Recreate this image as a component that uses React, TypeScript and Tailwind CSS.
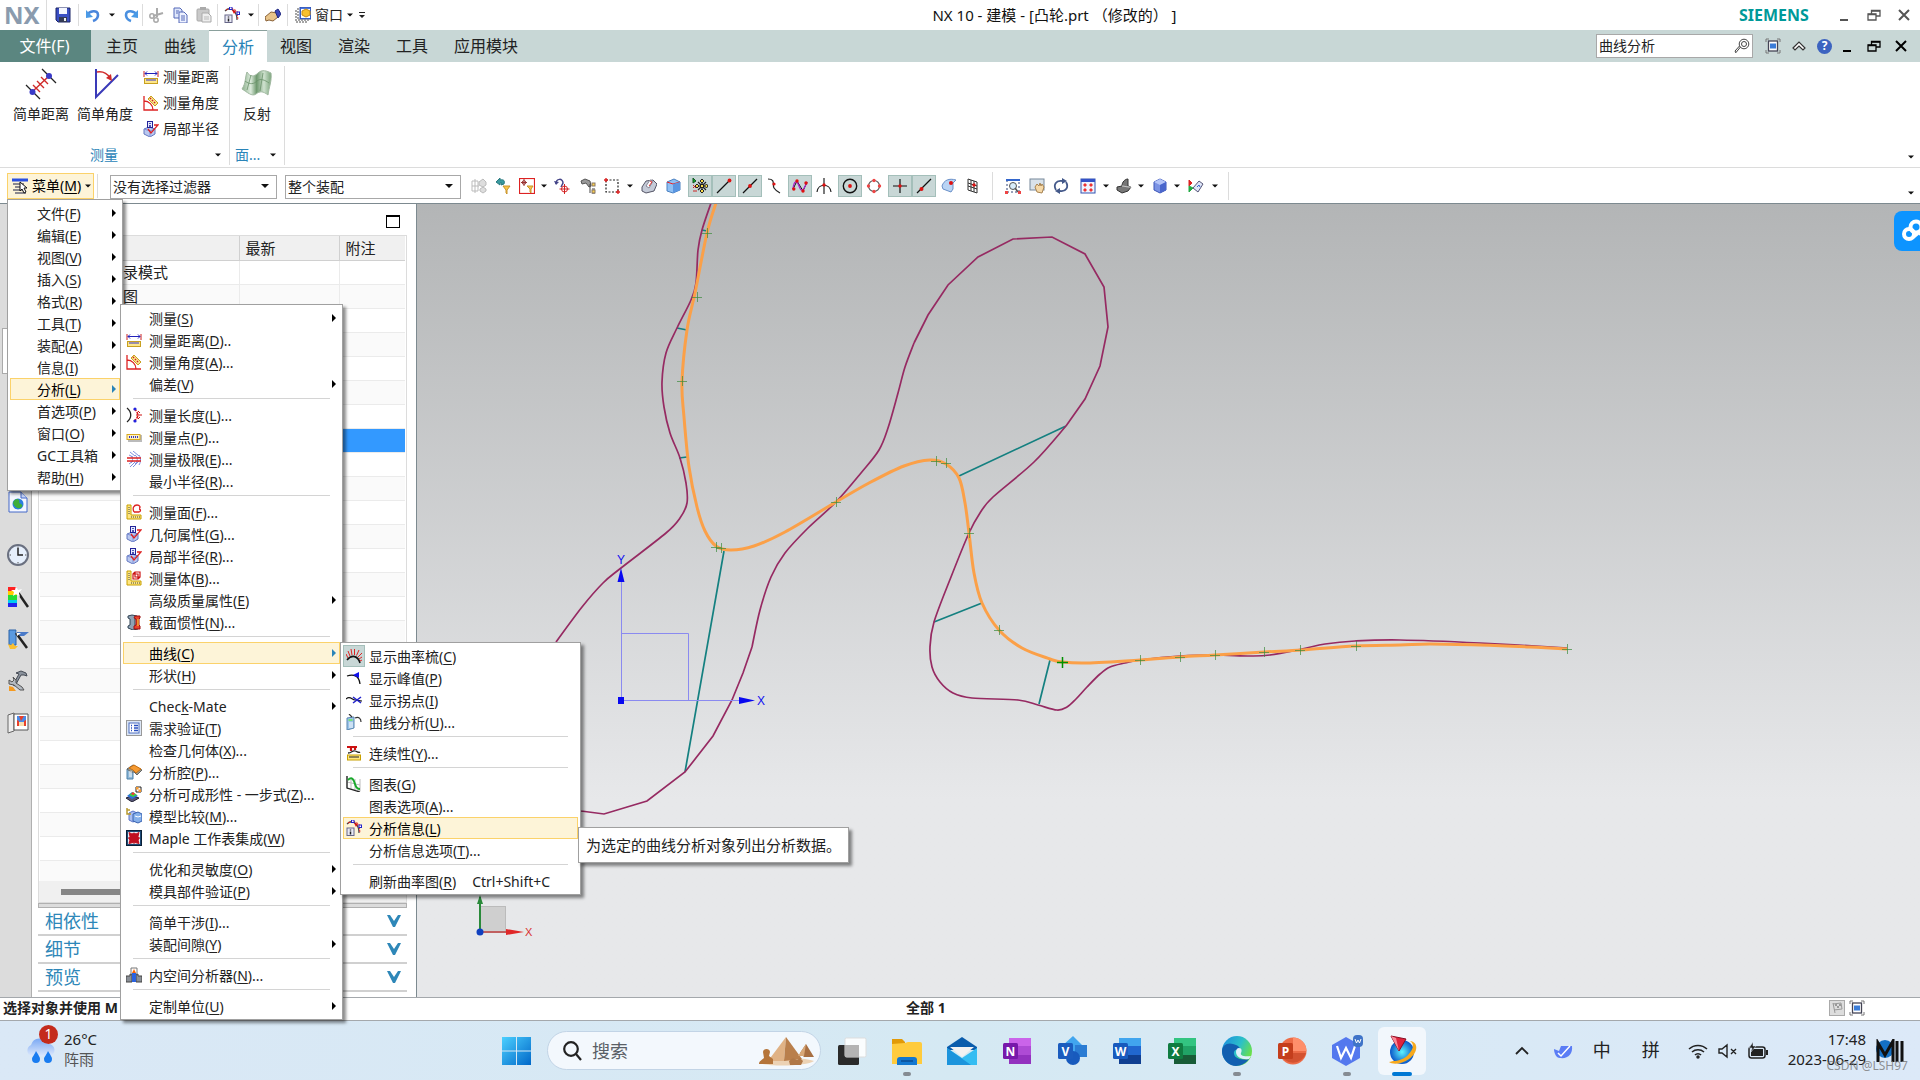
import React from "react";

type IconName = keyof typeof icons;

const icons = {
  dist: (<><path d="M1 2v6M15 2v6" stroke="#c22" /><path d="M2 4.5h12M4 2.5l-2 2 2 2M12 2.5l2 2-2 2" stroke="#22b" /><rect x="1.5" y="9.5" width="13" height="5" fill="#fde68a" stroke="#c8a020" /><path d="M4 10v2M6 10v2M8 10v2M10 10v2M12 10v2" stroke="#33c" /></>),
  angle: (<><path d="M1 1v14h14M1 6c5 0 9 4 9 9" stroke="#d22" strokeWidth="1.3" /><path d="M5 4L8 1l7 7-3 3z" fill="#fbe08a" stroke="#c8a020" /><path d="M7 4l1-1M9 6l1-1M11 8l1-1" stroke="#c22" strokeWidth="1.5" /></>),
  length: (<><path d="M1 1c5 4 5 10 0 14" stroke="#222" strokeWidth="1.3" /><path d="M8 2c5 3 5 9 0 12" stroke="#d11" strokeDasharray="3 1" strokeWidth="1.5" /><path d="M10 8h6M12 4l2 2M12 12l2-2" stroke="#c11" /><circle cx="9" cy="2" r="1.6" fill="#22d" /><circle cx="9" cy="14" r="1.6" fill="#22d" /></>),
  ruler: (<><path d="M2 12h13V6" stroke="#bbb" strokeWidth="2" /><rect x="1" y="5.500" width="13" height="5" fill="#fff3c0" stroke="#d8a820" /><path d="M3.500 7v2M5.500 7v2M7.500 7v2M9.500 7v2M11.500 7v2" stroke="#33c" /></>),
  extreme: (<><path d="M4 1l5 4M7 0l6 5M3 4l4 2M3 13l4-3M4 16l5-5M7 16l6-6M9 4c3 2 3 7 0 9M5 5c2 2 2 5 0 7M13 4c2 3 2 7 0 10" stroke="#8090e0" /><path d="M1 7h14M1 10h14" stroke="#d22" strokeWidth="1.3" /></>),
  face: (<><path d="M1 1h4v10h10v4H1z" fill="#ffe680" stroke="#c8a000" /><path d="M3 3v8M5 13h9" stroke="#444" strokeDasharray="1 1" /><path d="M8 8c-2-4 0-7 3-7s4 3 2 3M8 8h5c2-1 2-3 0-3" fill="#fff" stroke="#d22" strokeWidth="1.3" /></>),
  geo: (<><path d="M1 8l5-2 6 2v5l-5 3-6-3z" fill="#b9c8f0" stroke="#6478c0" /><path d="M1 8l6 2 5-2M7 10v6" stroke="#7e92d8" /><rect x="4.500" y=".5" width="5" height="6" fill="#e6ecff" stroke="#229" /><path d="M7 2v1M7 4v2" stroke="#229" strokeWidth="1.500" /><path d="M5 8l3 4 7-8h-4" stroke="#d22" strokeWidth="1.300" /></>),
  body: (<><path d="M1 1h4v10h10v4H1z" fill="#ffe680" stroke="#c8a000" /><path d="M3 3v8M5 13h9" stroke="#444" strokeDasharray="1 1" /><path d="M7 4h5v5H7zM9 2h5v5H9zM7 4l2-2M12 9l2-2" stroke="#c11" strokeWidth="1.200" /></>),
  inertia: (<><path d="M2 2l4-1 5 1v2L9 5v6l3 2v2l-5 1-5-2v-2l2-1V5L2 4z" fill="#8fa3b5" stroke="#345" /><path d="M9 2h5v2l-1 1v6l1 1v3H8v-3l2-1V5L8 4z" fill="#e8412c" stroke="#911" /><path d="M12 5v7" stroke="#fd3" /></>),
  list: (<><rect x=".5" y=".5" width="15" height="15" fill="#dce6f5" stroke="#999" /><rect x="3" y="3" width="10" height="10" fill="#fff" stroke="#4a6cc0" /><path d="M5 5.500h1M5 8h1M5 10.500h1M8 5.500h4M8 8h4M8 10.500h4" stroke="#2a50c0" strokeWidth="1.300" /></>),
  cavity: (<><path d="M1 5h6v10H1z" fill="#8fb8d8" stroke="#4a80a8" /><path d="M1 5l6-4 9 5-5 5-3-3H5z" fill="#9a9a8a" stroke="#666" /><path d="M3 4l5-3 7 4-5 4-3-3z" fill="#f59a32" stroke="#c87010" /><path d="M3 8h3M3 10h3M3 12h3" stroke="#fff" /></>),
  forming: (<><path d="M0 12l6-2 7 2-7 4z" fill="#557" stroke="#223" /><path d="M1 10l5-4 6 4-6 3z" fill="#2b6fe0" /><path d="M3 9l4-3 4 3-4 2z" fill="#3fcf3f" /><path d="M5 8l2-2 2 2-2 1z" fill="#f33" /><path d="M10 1h5v5h-5z" fill="#fff" stroke="#222" /><path d="M10 1h2.500v2.500H10zM12.500 3.500H15V6h-2.500z" fill="#f59a32" /></>),
  compare: (<><path d="M3 5l4-2 4 2v7l-4 2-4-2z" fill="#a9bdf0" stroke="#5a74c8" /><path d="M7 6l5-2 4 2v7l-4 2-5-2z" fill="#86b0ea" stroke="#3660b0" /><path d="M9 8l3 1 3-1" stroke="#fff" /><path d="M1 0v6h4M1 2h3" stroke="#b89a30" strokeWidth="1.500" /></>),
  maple: (<><rect x=".5" y=".5" width="15" height="15" fill="#1d4a76" stroke="#0a2036" /><rect x="2" y="2" width="12" height="12" fill="#e8eef4" /><path d="M3 2.500l3 1.500 2-1 2 1 3-1.500-1 4 1.500 1.500-1.500 2 1 3.500-4-1-1 1-1-1-4 1 1-3.500-1.500-2L4 6.500z" fill="#c01020" stroke="#c01020" /></>),
  inner: (<><path d="M0 15V9h4V7h2v8zM10 15V7h2v2h4v6z" fill="#8a8f96" stroke="#444" /><rect x="6" y="6" width="4" height="9" fill="#2a62e0" /><path d="M5 6V1h6v5" fill="#fff" stroke="#777" /><path d="M8 2l2 4H6z" fill="#f60" /></>),
  comb: (<><path d="M1 12c5-6 11-4 13 3" stroke="#111" strokeWidth="1.600" /><path d="M2 10L0 6M4 8L2 3M6 7L5 1M8.500 7V1M10.500 7.500L13 2M12 9l4-4M13 11l3-2M14 13l2-1" stroke="#d22" /></>),
  peak: (<><path d="M1 6c6-2 12-1 13 8" stroke="#111" strokeWidth="1.300" /><path d="M7 5l6-3v6z" fill="#11e" /></>),
  inflect: (<><path d="M0 7c4-4 6 1 9 1s4 1 7 1" stroke="#111" strokeWidth="1.200" /><path d="M7 5l8 6M15 5l-8 6" stroke="#22c" strokeWidth="1.500" /></>),
  curvean: (<><path d="M1 4l7-1v11l-7 2z" fill="#9ac4ea" stroke="#5a86b0" /><path d="M2.500 6h4" stroke="#7ae07a" strokeWidth="2" /><path d="M3 9h4M3 11h4M3 13h4" stroke="#fff" /><path d="M9 4c4-2 6 1 6 4M3 0l3 3" stroke="#333" strokeWidth="1.200" /></>),
  contin: (<><path d="M1 2h10M5 2v4M9 2v3" stroke="#c11" strokeWidth="2.200" /><path d="M2 8c4 0 4-3 7-2s4 2 5 1" stroke="#222" strokeWidth="1.300" /><rect x="1.500" y="10" width="13" height="5" fill="#ffe680" stroke="#c8a000" /><path d="M4 11v2M6 11v2M8 11v2M10 11v2M12 11v2" stroke="#222" /></>),
  graph: (<><path d="M1 0v12l13 3V3M5 2v11M9 3v11M1 6l13 3" stroke="#bbb" /><path d="M1 0v12l13 4" stroke="#222" strokeWidth="1.300" /><path d="M2 4c4-4 6 0 7 4s3 5 5 5" stroke="#1aa92c" strokeWidth="2" /></>),
  info: (<><path d="M1 4c3-3 6-3 9 0s3 6 3 9" stroke="#444" strokeWidth="1.200" /><path d="M2 3l5-2 6 3 1 9" stroke="#e22" strokeDasharray="2 1" /><path d="M8 3l4 1-2 3z" fill="#d11" /><rect x="5.500" y="0" width="2.500" height="2.500" fill="#fff" stroke="#22c" /><rect x="13" y="5" width="2.500" height="2.500" fill="#fff" stroke="#22c" /><rect x="1" y="8" width="7" height="7.500" fill="#e8e8f4" stroke="#668" /><path d="M4.500 9.500v1M4.500 11.500v3" stroke="#222" strokeWidth="1.500" /></>),
  save: (<><path d="M1 1h14v14H3l-2-2z" fill="#3a4fc4" stroke="#1b2466" /><rect x="4" y="1" width="8" height="6" fill="#f4f6ff" /><rect x="4" y="10" width="8" height="5" fill="#333a55" /><rect x="9" y="11" width="2" height="3" fill="#eee" /></>),
  undo: (<><path d="M2 8c2-4 11-6 11 0 0 3-2 5-5 6" stroke="#4a86dc" strokeWidth="2.600" /><path d="M1 3v8l7-1z" fill="#4a9ae6" /></>),
  redo: (<><path d="M14 8C12 4 3 2 3 8c0 3 2 5 5 6" stroke="#4a90e0" strokeWidth="2.600" /><path d="M15 3v8l-7-1z" fill="#4a9ae6" /></>),
  cut: (<><path d="M9 1v9M15 6L5 9" stroke="#aaa" strokeWidth="2" /><circle cx="4" cy="9" r="2.200" stroke="#aaa" strokeWidth="1.500" /><circle cx="8" cy="13" r="2.200" stroke="#aaa" strokeWidth="1.500" /></>),
  copy: (<><path d="M2 1h6l2 2v8H2z" fill="#dfe7fb" stroke="#5468b8" /><path d="M7 5h5l3 3v8H7z" fill="#eef2ff" stroke="#5468b8" /><path d="M9 9h4M9 11h4M9 13h4M4 4h3M4 6h2" stroke="#5468b8" /></>),
  paste: (<><rect x="1" y="2" width="12" height="12" rx="1" fill="#c9c9c9" stroke="#aaa" /><rect x="4" y="0" width="6" height="3" fill="#aaa" /><path d="M6 6h6l3 3v6H6z" fill="#eee" stroke="#aaa" /><path d="M8 10h5M8 12h5" stroke="#bbb" /></>),
  touch: (<><path d="M0 10l6-5 6 1 1 4-5 4-4-1-3 1z" fill="#e8c48a" stroke="#8a6238" /><path d="M10 4l3-2 3 5-3 4z" fill="#3a46b8" stroke="#222a80" /></>),
  winicon: (<><rect x="5" y="0" width="11" height="12" fill="#4a76e0" stroke="#2a4aa8" /><rect x="6" y="2" width="9" height="9" fill="#fff" /><path d="M7 4l4-2 4 2v4l-4 2-4-2z" fill="#f8c030" stroke="#c88a10" /><path d="M1 3v12h11M3 1v12h11" stroke="#888" strokeDasharray="2 1" strokeWidth="1.500" /></>),
  menu: (<><path d="M0 2h16" stroke="#2a50e0" strokeWidth="3" /><path d="M1 6h11M3 9h9M1 12h11M3 15h11" stroke="#667" strokeWidth="1.400" /><path d="M8 4v9l2-2 2 4 2-1-2-4h3z" fill="#fff" stroke="#111" /></>),
  treegray: (<><path d="M1 3h6v10H1zM4 1v14M1 8h7" stroke="#bbb" /><path d="M8 4l4-3 3 3v3L12 9 8 7zM9 11l3-2 3 2v2l-3 2-3-2z" fill="#ddd" stroke="#bbb" /></>),
  filterback: (<><path d="M1 4l4-4v2c4-1 5 1 4 4l-3 1 1-2H5v2z" fill="#3a9aa0" stroke="#2a7a80" /><path d="M8 8h7l-3 4v4l-1-1v-3z" fill="#fbc648" stroke="#c8932a" /></>),
  filterbox: (<><rect x=".5" y=".5" width="15" height="15" fill="#fff" stroke="#d22" strokeWidth="1.200" /><path d="M5 1v7M2 4.500h6" stroke="#933" /><circle cx="5" cy="4.500" r="1.800" stroke="#933" /><path d="M8 8h6l-2 3v4l-1-1v-3z" fill="#fbc648" stroke="#c8932a" /></>),
  rotpt: (<><path d="M2 6c0-6 7-6 7-1l-2 4" stroke="#448" strokeWidth="1.500" /><path d="M0 3l2 4 3-3z" fill="#448" /><circle cx="10.500" cy="11" r="3" stroke="#d22" /><path d="M10.500 6v10M5.500 11h10" stroke="#c22" /></>),
  bino: (<><path d="M1 3l4-2 5 2 1 5-2 1-3-4-4 1z" fill="#999" stroke="#555" /><path d="M10 6v9M12 7h3M12 11h3M12 15h3" stroke="#444" /><rect x="12" y="5" width="3" height="3" fill="#fbd048" stroke="#876" /><rect x="12" y="12" width="3" height="3" fill="#fbd048" stroke="#876" /></>),
  rect: (<><path d="M2 2h12v12H2z" stroke="#222" strokeDasharray="2 1.500" strokeWidth="1.200" /><path d="M0 2h4M2 0v4M12 14h4M14 12v4" stroke="#d22" strokeWidth="1.400" /></>),
  eraser: (<><path d="M1 9l4-6 7-1 4 4-3 7-8 2-4-2z" fill="#c5cbd8" stroke="#556" /><path d="M5 8l4-6 3 1-4 7z" fill="#fff" stroke="#889" /><path d="M9 3l2 1-3 4" stroke="#d33" /></>),
  cube: (<><path d="M2 4l7-3 6 3v8l-7 3-6-2z" fill="#8fc0f4" stroke="#4a80c0" /><path d="M2 4l6 2 7-2" stroke="#e22" /><path d="M8 6l7-2v8l-7 3z" fill="#5a96e2" /></>),
  multi: (<><path d="M1 0v5l3-2z" fill="#1a2" stroke="#152" /><path d="M1 7l3 3M4 7l-3 3M1 13h4" stroke="#c22" /><path d="M10 2v12M4 8h12M6 4l8 8M14 4l-8 8" stroke="#222" strokeWidth="1.200" /><path d="M10 1l2 2-2 2-2-2zM10 11l2 2-2 2-2-2zM5 6l2 2-2 2-2-2zM14.500 6l1.500 2-1.500 2-2-2zM10 6l2 2-2 2-2-2z" fill="#fbdc48" stroke="#222" /></>),
  line: (<><path d="M1 15L14 2" stroke="#111" strokeWidth="1.300" /><circle cx="13.500" cy="2.500" r="1.900" fill="#d11" /></>),
  linemid: (<><path d="M1 15L15 1" stroke="#111" strokeWidth="1.300" /><circle cx="8" cy="8" r="1.900" fill="#d11" /></>),
  scurve: (<><path d="M2 1c8 0 4 6 6 9s4 4 6 5" stroke="#222" strokeWidth="1.200" /><circle cx="8" cy="6" r="1.600" fill="#d11" /></>),
  spline: (<><path d="M1 11L5 3l6 10 4-9" stroke="#111" /><path d="M1 11C2 2 5 2 7 8s4 6 8-4" stroke="#a2c" strokeWidth="1.200" /><circle cx="1.800" cy="11" r="1.700" fill="#d11" /><circle cx="5" cy="3" r="1.700" fill="#d11" /><circle cx="11" cy="13" r="1.700" fill="#d11" /><circle cx="14" cy="5" r="1.700" fill="#d11" /></>),
  cross: (<><path d="M8 0v16M1 14c1-9 13-9 14 0" stroke="#222" strokeWidth="1.200" /><circle cx="8" cy="7" r="1.700" fill="#d11" /></>),
  circle: (<><circle cx="8" cy="8" r="6.700" stroke="#111" strokeWidth="1.400" /><circle cx="8" cy="8" r="1.900" fill="#d11" /></>),
  quad: (<><circle cx="8" cy="8" r="5.500" stroke="#555" strokeWidth="1.200" /><circle cx="8" cy="2.500" r="1.700" fill="#e44" /><circle cx="8" cy="13.500" r="1.700" fill="#e44" /><circle cx="2.500" cy="8" r="1.700" fill="#e44" /><circle cx="13.500" cy="8" r="1.700" fill="#e44" /></>),
  plus: (<><path d="M8 1v14M1 8h14" stroke="#111" strokeWidth="1.200" /><circle cx="8" cy="8" r="1.700" fill="#d11" /></>),
  lineclose: (<><path d="M1 15L15 1" stroke="#111" strokeWidth="1.300" /><circle cx="5.500" cy="11" r="2" fill="#d11" /></>),
  surf: (<><path d="M1 8c2-6 7-8 14-6l-3 3v6l-2 3-8-3z" fill="#b9d4f4" stroke="#6a90c8" /><circle cx="10" cy="5" r="2" fill="#d11" /></>),
  mesh: (<><path d="M3 1l9 3v11l-9-3zM3 5l9 3M3 8l9 3M6 2v11M9 3v11" stroke="#333" /><circle cx="9" cy="7" r="1.700" fill="#d11" /></>),
  fit: (<><path d="M2 2v12h12V2" stroke="#347" strokeDasharray="2 2" /><path d="M1 2h14" stroke="#36c" strokeWidth="2" /><circle cx="8" cy="8" r="3.500" fill="#d8ecfa" stroke="#555" /><path d="M10 10l3 4" stroke="#555" strokeWidth="1.600" /><path d="M0 13h3v3H0zM13 13h3v3h-3z" fill="#e44" /></>),
  pan: (<><rect x="1" y="1" width="14" height="11" fill="#d9e2ea" stroke="#789" /><path d="M6 9l2 5 5 1 2-6-2-3-1 2-1-3-1 3-2-2z" fill="#f6d9a8" stroke="#a88452" /></>),
  rot: (<><path d="M3 12C0 7 3 2 9 3M13 4c3 5 0 10-6 9" stroke="#44598a" strokeWidth="1.800" /><path d="M9 0l5 3-5 3zM7 10l-5 3 5 3z" fill="#44598a" /></>),
  wingrid: (<><rect x="1" y="1" width="14" height="14" fill="#f0f4ff" stroke="#3352b0" /><path d="M1 2.500h14" stroke="#3352c8" strokeWidth="3" /><path d="M4 6h2v2H4zM10 6h2v2h-2zM4 11h2v2H4zM10 11h2v2h-2z" fill="#e33" stroke="#e33" /></>),
  shade: (<><path d="M1 9l5-1c0-4 3-7 6-7v7l3 1-3 4-6 2-5-3z" fill="#777" stroke="#333" /><path d="M6 8c2 0 4 1 9 1" stroke="#ddd" /></>),
  bluecube: (<><path d="M2 4l6-3 6 3v8l-6 3-6-3z" fill="#7a92e4" stroke="#3a54b8" /><path d="M2 4l6 3 6-3-6-3z" fill="#b4c4f8" /><path d="M8 7v8l6-3V4z" fill="#4a66cc" /></>),
  hidepart: (<><path d="M1 2v6l3-3z" fill="#d22" stroke="#d22" /><path d="M1 8v6l4-4z" fill="#2a4" stroke="#2a4" /><path d="M5 10l6-7 4 3-5 8z" fill="#dfe6f8" stroke="#557" /><path d="M9 9l2-2 1 2" stroke="#36c" /></>),
  calc: (<><path d="M1 1h3M1 1v3M15 1h-3M15 1v3M1 15h3M1 15v-3M15 15h-3M15 15v-3" stroke="#777" /><rect x="3.500" y="3" width="9" height="10" fill="#fff" stroke="#445" strokeWidth="1.300" /><rect x="5" y="5.500" width="6" height="5" fill="#3a7cd8" /></>),
  flag: (<><rect x=".5" y=".5" width="15" height="15" fill="#ddd" stroke="#aaa" /><path d="M4 3l2 10M4 4l8-1 1 6-8 1" stroke="#999" /><path d="M6 4h2v2H6zM10 4h2v2h-2zM8 6h2v2H8z" fill="#999" /></>),
};

function Icon({ n }: { n: IconName }) {
  return (
    <svg viewBox="0 0 16 16" fill="none" className="size-4 shrink-0" aria-hidden="true">
      {icons[n]}
    </svg>
  );
}

function Caret({ large }: { large?: boolean }) {
  return (
    <svg viewBox="0 0 8 4" className={large ? "h-1 w-2 shrink-0" : "h-1 w-1.5 shrink-0"} aria-hidden="true">
      <path d="M0 0h8L4 4z" fill="#111" />
    </svg>
  );
}

function Label({ text }: { text: string }) {
  const i = text.indexOf("_");
  if (i < 0) return <>{text}</>;
  return (
    <>
      {text.slice(0, i)}
      <span className="underline underline-offset-2">{text[i + 1]}</span>
      {text.slice(i + 2)}
    </>
  );
}

type Entry = null | { t: string; icon?: IconName; sub?: boolean; active?: boolean; pressed?: boolean; key2?: string };

function MenuRow({ e, compact }: { e: Exclude<Entry, null>; compact?: boolean }) {
  return (
    <button
      role="menuitem"
      className={`flex h-[22px] w-full items-center border pr-[3px] text-left text-sm leading-5 whitespace-nowrap ${
        e.active ? "border-[#fbd26a] bg-[#fdf4d8] text-black" : "border-transparent text-[#222]"
      }`}
    >
      {!compact && (
        <span className={`-ml-px flex h-[22px] w-[22px] items-center justify-center ${e.pressed ? "border border-[#a4bfba] bg-[#c8d7d6]" : ""}`}>
          {e.icon && <Icon n={e.icon} />}
        </span>
      )}
      <span className={compact ? "pt-0.5 pl-[26px]" : "pt-0.5 pl-1"}>
        <Label text={e.t} />
      </span>
      {e.key2 && <span className="pt-0.5 pl-4">{e.key2}</span>}
      {e.sub && (
        <svg viewBox="0 0 4 8" className={`ml-auto h-2 w-1 ${e.active ? "text-[#2a84b8]" : "text-black"}`} aria-hidden="true">
          <path d="M0 0l4 4-4 4z" fill="currentColor" />
        </svg>
      )}
    </button>
  );
}

function Menu({ items, className, compact }: { items: Entry[]; className: string; compact?: boolean }) {
  return (
    <div role="menu" className={`absolute border border-[#a0a0a0] bg-white p-0.5 shadow-[3px_3px_3px_rgba(0,0,0,0.45)] ${className}`}>
      {items.map((e, i) =>
        e === null ? (
          <div key={i} className="mx-2.5 h-[9px] pt-[3px]">
            <div className="h-px bg-[#d4d4d4]" />
          </div>
        ) : (
          <MenuRow key={i} e={e} compact={compact} />
        )
      )}
    </div>
  );
}

const mainMenu: Entry[] = [
  { t: "文件(_F)" }, { t: "编辑(_E)" }, { t: "视图(_V)" }, { t: "插入(_S)" }, { t: "格式(_R)" }, { t: "工具(_T)" },
  { t: "装配(_A)" }, { t: "信息(_I)" }, { t: "分析(_L)", active: true }, { t: "首选项(_P)" }, { t: "窗口(_O)" }, { t: "GC工具箱" }, { t: "帮助(_H)" },
].map((e) => ({ ...e, sub: true }));

const analysisMenu: Entry[] = [
  { t: "测量(_S)", sub: true }, { t: "测量距离(_D)..", icon: "dist" }, { t: "测量角度(_A)...", icon: "angle" }, { t: "偏差(_V)", sub: true },
  null,
  { t: "测量长度(_L)...", icon: "length" }, { t: "测量点(_P)...", icon: "ruler" }, { t: "测量极限(_E)...", icon: "extreme" }, { t: "最小半径(_R)..." },
  null,
  { t: "测量面(_F)...", icon: "face" }, { t: "几何属性(_G)...", icon: "geo" }, { t: "局部半径(_R)...", icon: "geo" }, { t: "测量体(_B)...", icon: "body" },
  { t: "高级质量属性(_E)", sub: true }, { t: "截面惯性(_N)...", icon: "inertia" },
  null,
  { t: "曲线(_C)", sub: true, active: true }, { t: "形状(_H)", sub: true },
  null,
  { t: "Chec_k-Mate", sub: true }, { t: "需求验证(_T)", icon: "list" }, { t: "检查几何体(_X)..." }, { t: "分析腔(_P)...", icon: "cavity" },
  { t: "分析可成形性 - 一步式(_Z)...", icon: "forming" }, { t: "模型比较(_M)...", icon: "compare" }, { t: "Maple 工作表集成(_W)", icon: "maple" },
  null,
  { t: "优化和灵敏度(_O)", sub: true }, { t: "模具部件验证(_P)", sub: true },
  null,
  { t: "简单干涉(_I)..." }, { t: "装配间隙(_Y)", sub: true },
  null,
  { t: "内空间分析器(_N)...", icon: "inner" },
  null,
  { t: "定制单位(_U)", sub: true },
];

const curveMenu: Entry[] = [
  { t: "显示曲率梳(_C)", icon: "comb", pressed: true }, { t: "显示峰值(_P)", icon: "peak" }, { t: "显示拐点(_I)", icon: "inflect" }, { t: "曲线分析(_U)...", icon: "curvean" },
  null,
  { t: "连续性(_Y)...", icon: "contin" },
  null,
  { t: "图表(_G)", icon: "graph" }, { t: "图表选项(_A)..." }, { t: "分析信息(_L)", icon: "info", active: true }, { t: "分析信息选项(_T)..." },
  null,
  { t: "刷新曲率图(_R)", key2: "Ctrl+Shift+C" },
];

function WinButtons({ className }: { className: string }) {
  return (
    <div className={`flex items-center ${className}`}>
      <button aria-label="最小化"><svg viewBox="0 0 14 14" className="size-3.5"><path d="M3 12h8" stroke="currentColor" strokeWidth="2" /></svg></button>
      <button aria-label="还原"><svg viewBox="0 0 14 14" className="size-3.5" fill="none" stroke="currentColor" strokeWidth="1.3"><path d="M1 6h8v6H1zM4.500 6V2.500H13V8H9" /><path d="M1 6.500h8M4.500 3H13" /></svg></button>
      <button aria-label="关闭"><svg viewBox="0 0 14 14" className="size-3.5" stroke="currentColor" strokeWidth="2"><path d="M2 2l10 10M12 2L2 12" /></svg></button>
    </div>
  );
}

function TitleBar() {
  const group = "flex h-[22px] items-center border-r border-[#dcdcdc]";
  return (
    <header className="flex h-[30px] items-center bg-white">
      <div className="flex w-[370px] items-center">
        <div className="flex h-[30px] w-[47px] items-center border-r border-[#dcdcdc] pl-1 text-2xl leading-7 font-bold text-[#8a9bae]">NX</div>
        <div className={`${group} w-8 justify-center`}><button aria-label="保存"><Icon n="save" /></button></div>
        <div className={`${group} w-16 gap-2 pl-1.5`}>
          <button aria-label="撤消"><Icon n="undo" /></button><Caret /><button aria-label="重做"><Icon n="redo" /></button>
        </div>
        <div className={`${group} w-[75px] justify-center gap-2`}>
          <button aria-label="剪切"><Icon n="cut" /></button><button aria-label="复制"><Icon n="copy" /></button><button aria-label="粘贴"><Icon n="paste" /></button>
        </div>
        <div className={`${group} w-[41px] gap-2 pl-1.5`}><button aria-label="分析信息"><Icon n="info" /></button><Caret /></div>
        <div className={`${group} w-[29px] justify-center`}><button aria-label="触控模式"><Icon n="touch" /></button></div>
        <button className="flex items-center gap-1 pl-[7px] text-sm text-[#222]">
          <Icon n="winicon" />窗口<Caret />
          <svg viewBox="0 0 6 7" className="ml-0.5 h-[7px] w-1.5" aria-hidden="true"><path d="M0 0h6v1H0zM0 3h6L3 6z" fill="#222" /></svg>
        </button>
      </div>
      <h1 className="flex-1 text-center text-[15px] leading-7 whitespace-pre text-[#111]">NX 10 - 建模 - [凸轮.prt （修改的） ]</h1>
      <div className="flex w-[181px] items-center">
        <span className="w-[98px] text-base font-bold text-[#009999]">SIEMENS</span>
        <WinButtons className="gap-4 text-[#555]" />
      </div>
    </header>
  );
}

function TabBar() {
  const tabs = ["主页", "曲线", "分析", "视图", "渲染", "工具", "应用模块"];
  return (
    <nav className="flex h-8 items-stretch bg-[#c8d7d6] text-base text-[#222]">
      <button className="mr-0.5 w-[91px] bg-[#5b8680] pr-0.5 text-white">文件(F)</button>
      {tabs.map((t) => (
        <button key={t} className={t === "分析" ? "border-t border-[#8aa09c] bg-white px-[13px] text-[#2a84b8]" : "px-[13px]"}>{t}</button>
      ))}
      <div className="ml-auto flex items-center">
        <label className="mr-3 flex h-6 w-[157px] items-center border border-[#a8a8a8] bg-white px-0.5">
          <input aria-label="命令查找器" defaultValue="曲线分析" className="w-full text-sm outline-none" />
          <svg viewBox="0 0 16 16" fill="none" stroke="#444" className="size-4 shrink-0"><circle cx="10" cy="6" r="4.800" /><circle cx="10" cy="6" r="2.500" /><path d="M6.500 9L2 14.500M5.500 8L1 13l1 2" /></svg>
        </label>
        <div className="flex items-center gap-2.5">
          <Icon n="calc" />
          <svg viewBox="0 0 16 16" className="size-4"><path d="M2 10l6-6 6 6-2 2-4-4-4 4z" fill="#fff" stroke="#333" strokeWidth="1.200" /></svg>
          <span className="flex size-[15px] items-center justify-center rounded-full bg-[#3c63c0] text-xs font-bold text-white">?</span>
        </div>
        <WinButtons className="mr-3 ml-2 gap-[13px] text-black" />
      </div>
    </nav>
  );
}

function Ribbon() {
  return (
    <section className="flex h-[106px] border-b border-[#dcdcdc] bg-white text-sm text-[#222]">
      <div className="mt-1 mb-0.5 flex w-[230px] flex-col justify-between border-r border-[#dcdcdc]">
        <div className="flex items-start pl-[13px]">
          <button className="flex w-16 flex-col items-start gap-1">
            <svg viewBox="0 0 32 32" fill="none" className="mt-0.5 ml-3 size-8">
              <path d="M1 17l14 14M17 1l14 14" stroke="#222" strokeWidth="1.300" /><path d="M7 24L24 8M8 17l7 7M12 13l7 7M16 9l7 7" stroke="#d02a2a" strokeWidth="1.400" />
              <circle cx="7.500" cy="24" r="3" fill="#3a3ac8" /><circle cx="24" cy="8" r="3" fill="#3a3ac8" />
            </svg>
            简单距离
          </button>
          <button className="flex w-[66px] flex-col items-start gap-1">
            <svg viewBox="0 0 32 32" fill="none" className="mt-0.5 ml-3.5 size-8">
              <path d="M5 1v28L27 7" stroke="#3a3ab8" strokeWidth="2" /><path d="M6 4c6-1 10 1 13 6" stroke="#d02a2a" strokeWidth="1.400" /><path d="M21 13l-6-3 5-4z" fill="#d02a2a" />
            </svg>
            简单角度
          </button>
          <div className="-mt-0.5 flex flex-col">
            {([["dist", "测量距离"], ["angle", "测量角度"], ["geo", "局部半径"]] as [IconName, string][]).map(([n, t]) => (
              <button key={t} className="flex h-[26px] items-center gap-1"><Icon n={n} />{t}</button>
            ))}
          </div>
        </div>
        <div className="flex items-center justify-between pr-2 pl-[90px] text-[#2a84b8]">测量<Caret /></div>
      </div>
      <div className="mt-1 mb-0.5 flex w-[55px] flex-col justify-between border-r border-[#dcdcdc]">
        <button className="flex flex-col items-center gap-1">
          <svg viewBox="0 0 32 32" fill="none" className="mt-0.5 size-8">
            <defs><linearGradient id="refl"><stop offset="0" stopColor="#8cb08c" /><stop offset=".3" stopColor="#dcebdc" /><stop offset=".5" stopColor="#6e986e" /><stop offset=".75" stopColor="#cfe2cf" /><stop offset="1" stopColor="#7aa47a" /></linearGradient></defs>
            <path d="M6 4c3 5 7 5 11 1s9-2 13 0c1 8-2 14-3 22-5-4-8-4-12-1s-9-2-14-5c4-6 3-12 5-17z" fill="url(#refl)" stroke="#a0b8a0" />
            <path d="M4 13c5 4 9 3 12 0s8-1 12 2M10 7L6 22M22 5l-3 18" stroke="#6a906a" strokeWidth=".8" />
          </svg>
          反射
        </button>
        <div className="flex items-center justify-between pr-2 pl-[5px] text-[#2a84b8]">面...<Caret /></div>
      </div>
      <div className="mr-1.5 mb-2 ml-auto flex items-end"><Caret /></div>
    </section>
  );
}

type Tool = IconName | "|" | ".";
const tools: [Tool, string][] = [
  ["treegray", "w-6"], ["filterback", "w-6"], ["filterbox", "w-6"], [".", "w-2.5 mr-px"], ["rotpt", "w-6"], ["bino", "w-6 ml-0.5"], ["rect", "w-6 mr-px"], [".", "w-2.5 mr-0.5"],
  ["eraser", "w-6"], ["cube", "w-6 mr-[3px]"], ["multi", "w-6 on"], ["line", "w-6 on mr-0.5"], ["linemid", "w-6 on"], ["scurve", "w-6 mr-0.5"], ["spline", "w-6 on"], ["cross", "w-6 mr-0.5"],
  ["circle", "w-6 on"], ["quad", "w-6 mr-0.5"], ["plus", "w-6 on"], ["lineclose", "w-6 on mr-px"], ["surf", "w-6"], ["mesh", "w-6"], ["|", "mr-2 ml-[7px]"],
  ["fit", "w-6"], ["pan", "w-6"], ["rot", "w-6 mr-[3px]"], ["wingrid", "w-6"], [".", "w-3"], ["shade", "w-6"], [".", "w-2.5 mr-0.5"], ["bluecube", "w-6"], [".", "w-2.5 mr-0.5"], ["hidepart", "w-6"], [".", "w-3.5"], ["|", "ml-1.5"],
];

function Combo({ value, label, className }: { value: string; label: string; className: string }) {
  return (
    <div className={`relative h-6 ${className}`}>
      <select aria-label={label} className="size-full appearance-none border border-[#a8a8a8] bg-white pl-0.5 text-sm leading-5 text-[#222] outline-none">
        <option>{value}</option>
      </select>
      <span className="pointer-events-none absolute inset-y-0 right-2 flex items-center"><Caret large /></span>
    </div>
  );
}

function Toolbar() {
  return (
    <section className="flex h-9 items-center border-b border-[#7d8a90] bg-white pl-[7px]">
      <button className="flex h-[26px] w-[87px] items-center gap-1 border border-[#fbd26a] bg-[#fdf4d8] pl-1 text-sm whitespace-nowrap">
        <Icon n="menu" /><span>菜单(<span className="underline underline-offset-2">M</span>)</span><Caret />
      </button>
      <div className="mr-3 ml-[3px] h-6 w-px bg-[#dcdcdc]" />
      <Combo value="没有选择过滤器" label="类型过滤器" className="mr-2 w-[167px]" />
      <Combo value="整个装配" label="选择范围" className="mr-1.5 w-[176px]" />
      {tools.map(([n, c], i) =>
        n === "|" ? (
          <div key={i} className={`h-7 w-px bg-[#dcdcdc] ${c}`} />
        ) : n === "." ? (
          <span key={i} className={`flex justify-center ${c}`}><Caret /></span>
        ) : (
          <button key={i} aria-label={n} className={`flex h-[22px] items-center justify-center ${c} ${c.includes("on") ? "border border-[#a4bfba] bg-[#c8d7d6]" : ""}`}>
            <Icon n={n} />
          </button>
        )
      )}
      <div className="mr-1.5 mb-2 ml-auto self-end"><Caret /></div>
    </section>
  );
}

function ResourceBar() {
  return (
    <aside className="flex w-8 flex-col items-center border-r border-[#b0b0b0] bg-[#dcdcdc] pt-[124px] pl-0.5">
      <div className="h-[46px] w-full border border-[#aaa] bg-white" />
      <div className="mt-[117px] flex flex-col items-center gap-5 pl-0.5">
        <svg viewBox="0 0 22 22" className="mb-[11px] size-[22px]"><path d="M2 1h12l6 6v14H2z" fill="#f4f7ff" stroke="#4468c8" /><path d="M14 1v6h6" fill="#c8d6fa" stroke="#4468c8" /><circle cx="11" cy="13" r="5.500" fill="#2b7fe0" /><path d="M6 12c1-4 5-5 6-3s-1 3 2 4c2 1 2 3-1 4-2 1-6-1-7-5z" fill="#3fae3a" /></svg>
        <svg viewBox="0 0 22 22" className="size-[22px]"><circle cx="11" cy="11" r="10" fill="#e6effc" stroke="#6a7080" strokeWidth="2" /><path d="M11 4v7h5" stroke="#222" strokeWidth="1.500" fill="none" /><path d="M11 2.500v1.500M11 18v1.500M2.500 11H4M18 11h1.500" stroke="#555" /></svg>
        <svg viewBox="0 0 22 22" className="size-[22px]"><path d="M1 1h9v4H1z" fill="#f22" /><path d="M1 5h9v4H1z" fill="#fc0" /><path d="M1 9h9v5H1z" fill="#2d3" /><path d="M1 14h9v3H1z" fill="#0ce" /><path d="M1 17h9v4H1z" fill="#22e" /><path d="M10 5l11 16" stroke="#222" strokeWidth="2.500" /><path d="M9 0l2 4 4-1-3 4 1 4-4-3-3 2 1-4-3-2h4z" fill="#fff" /></svg>
        <svg viewBox="0 0 22 22" className="size-[22px]"><path d="M2 2h7v15H2z" fill="#5a9ae0" stroke="#2a62a8" /><path d="M10 4h12l-5 4h-6z" fill="#4a7ac8" /><path d="M9 5l11 15" stroke="#222" strokeWidth="2.500" /><path d="M1 16l3 1 2-2 2 3 3 0-3 3H3z" fill="#fbc030" /><path d="M9 1l1 4 4 0-4 3z" fill="#fff" /></svg>
        <svg viewBox="0 0 22 22" className="size-[22px]"><path d="M9 3l5-2 5 2 1 3-3-1-3 0-6 11-2-1 6-11z" fill="#8a929c" stroke="#454b55" /><path d="M2 10l3 2 2-2-1-3 3 3v3l6 4 2 3-4 0-6-5-5-1z" fill="#b4bac2" stroke="#555" /><path d="M2 21v-5l4 1 3 4z" fill="#f59a20" /></svg>
        <svg viewBox="0 0 22 22" className="size-[22px]"><path d="M1 3l6-2v18l-6 2z" fill="#eee" stroke="#666" /><path d="M7 2h14v16H7z" fill="#fff" stroke="#555" /><path d="M10 4h9v10h-9z" fill="#e8402a" /><path d="M10 4h2l2 5 3-5h2v4l-2 1v3h-5V9l-2-1z" fill="#4a8ae8" /><path d="M12 14v-4h5v4z" fill="#f8e0b0" /></svg>
      </div>
    </aside>
  );
}

function Navigator() {
  const names = ["录模式", "图"];
  return (
    <aside className="flex w-[385px] flex-col border-r border-[#7d8a90] bg-white pb-[5px] pl-1.5">
      <div className="flex h-[31px] items-center justify-end pt-1 pr-4">
        <button aria-label="最大化" className="h-[13px] w-3.5 border border-t-2 border-black" />
      </div>
      <div className="mr-[9px] min-h-0 flex-1 overflow-hidden border-x border-t border-[#dcdcdc] px-px">
        <table className="w-full table-fixed border-collapse text-left text-[15px] text-[#222]">
          <colgroup><col /><col className="w-[100px]" /><col className="w-[66px]" /></colgroup>
          <thead>
            <tr className="h-6 bg-[#f0f0f0]">
              <th className="border-r border-b border-[#d0d0d0]" />
              <th className="border-r border-b border-[#d0d0d0] pl-1.5 leading-5 font-normal">最新</th>
              <th className="border-b border-[#d0d0d0] pl-1.5 leading-5 font-normal">附注</th>
            </tr>
          </thead>
          <tbody>
            {Array.from({ length: 27 }, (_, i) => (
              <tr key={i} className={`h-6 border-b border-[#ebebeb] ${i === 7 ? "bg-[#3399ff]" : i % 2 ? "bg-[#fafafa]" : "bg-white"}`}>
                <td className="border-r border-[#ebebeb] pl-[83px] leading-5">{names[i] ?? ""}</td>
                <td className="border-r border-[#ebebeb]" />
                <td />
              </tr>
            ))}
          </tbody>
        </table>
      </div>
      <div className="mr-[9px] flex h-[22px] items-center border-x border-b border-[#dcdcdc] bg-[#f0f0f0] pl-[22px]"><div className="h-1.5 w-60 bg-[#868686]" /></div>
      <div className="mr-[9px] h-[5px] border border-[#b0b0b0] bg-[#dcdcdc]" />
      {["相依性", "细节", "预览"].map((t) => (
        <button key={t} className="mr-[9px] flex h-7 items-center justify-between border-b-2 border-[#d0d0d0] pr-1.5 pl-[7px] text-lg leading-6 text-[#2e87b8]">
          {t}
          <svg viewBox="0 0 14 12" className="h-3 w-3.5"><path d="M0 0h3l4 6 4-6h3L8 12H6z" fill="currentColor" /></svg>
        </button>
      ))}
    </aside>
  );
}

type P = [number, number];

function smooth(pts: P[]) {
  let d = `M${pts[0][0]} ${pts[0][1]}`;
  for (let i = 0; i < pts.length - 1; i++) {
    const a = pts[Math.max(i - 1, 0)];
    const b = pts[i];
    const c = pts[i + 1];
    const e = pts[Math.min(i + 2, pts.length - 1)];
    d += `C${b[0] + (c[0] - a[0]) / 6} ${b[1] + (c[1] - a[1]) / 6} ${c[0] - (e[0] - b[0]) / 6} ${c[1] - (e[1] - b[1]) / 6} ${c[0]} ${c[1]}`;
  }
  return d;
}

const profile: P[] = [[716, 203], [707, 233], [695, 293], [687, 330], [682, 382], [684, 417], [689, 467], [697, 507], [705, 531], [716, 546], [731, 550], [754, 546], [785, 532], [836, 502], [869, 483], [904, 466], [930, 460], [946, 464], [959, 478], [965, 503], [969, 533], [974, 573], [982, 603], [999, 630], [1022, 648], [1050, 659], [1062, 662], [1087, 663], [1140, 660], [1180, 657], [1215, 655], [1264, 652], [1302, 650], [1355, 646], [1400, 645], [1430, 644], [1480, 645], [1530, 647], [1567, 649]];
const combLeft: P[] = [[711, 203], [702, 230], [698, 250], [696, 283], [691, 300], [677, 328], [666, 353], [662, 382], [664, 407], [670, 433], [680, 458], [686, 483], [687, 503], [680, 518], [666, 533], [621, 568], [603, 583], [582, 607], [556, 642]];
const combBottom: P[] = [[560, 806], [581, 811], [604, 814], [647, 801], [685, 772], [713, 736], [732, 700], [743, 673], [752, 647]];
const combMid: P[] = [[752, 647], [760, 610], [771, 577], [785, 553], [808, 528], [836, 502], [861, 473], [879, 450], [888, 428], [898, 393], [905, 367], [914, 343]];
const combLoop: P[] = [[914, 343], [928, 315], [948, 285], [978, 257], [1013, 239], [1052, 237], [1085, 254], [1104, 287], [1108, 327], [1100, 366], [1085, 399], [1066, 426]];
const combRight: P[] = [[1066, 426], [1034, 462], [993, 497], [980, 513], [969, 533], [951, 577], [934, 622], [930, 647], [932, 667], [940, 682], [953, 693], [972, 698], [1018, 700], [1038, 705], [1057, 710], [1067, 707], [1076, 699], [1087, 687], [1100, 674], [1110, 667], [1125, 663], [1140, 660], [1180, 656], [1215, 655], [1250, 656], [1270, 655], [1302, 649], [1325, 644], [1355, 641], [1400, 640], [1480, 643], [1567, 648]];
const knots: P[] = [[707, 233], [697, 297], [682, 381], [716, 547], [721, 548], [836, 502], [936, 461], [946, 463], [969, 533], [999, 630], [1062, 662], [1140, 660], [1180, 657], [1215, 655], [1264, 652], [1300, 650], [1356, 646], [1567, 649]];

function Viewport() {
  return (
    <main className="relative min-w-0 flex-1 overflow-hidden bg-linear-to-b from-[#b3b5b6] to-[#e7e8ea] to-75%">
      <svg className="absolute inset-0 size-full" fill="none" aria-label="曲率梳">
        <g transform="translate(-417 -204)">
          <g stroke="#148080" strokeWidth="1.700">
            <path d="M959 476L1066 426M982 603L934 622M1050 660L1039 704M724 551L685 772M677 328L687 330M679 458L687 457M702 230L707 231" />
          </g>
          <g stroke="#962a62" strokeWidth="1.700">
            <path d={smooth(combLeft)} /><path d={smooth(combMid)} /><path d={smooth(combRight)} />
            <polyline points={combBottom.join(" ")} /><polyline points={combLoop.join(" ")} />
          </g>
          <g stroke="#8a8af0" strokeWidth="1"><path d="M621.500 575V700.500H745M621.500 633.500H688.500V700.500" /></g>
          <path d="M621 568l3.500 14h-7zM755 700.500l-16-3.500v7zM618 697h6v7h-6z" fill="#0808f0" />
          <g fill="#1010f0" fontSize="12" fontFamily="Liberation Sans"><text x="617" y="564">Y</text><text x="757" y="705">X</text></g>
          <path d={smooth(profile)} stroke="#fba048" strokeWidth="3" />
          <path d={knots.map(([x, y]) => `M${x - 5} ${y + 0.5}h10M${x + 0.5} ${y - 5}v10`).join("")} stroke="#3c8c3c" strokeOpacity=".7" />
          <path d="M1057 662.500h11M1062.500 657v11" stroke="#009000" strokeWidth="1.500" />
          <rect x="480.500" y="906.500" width="25" height="25" fill="#cfcfcf" stroke="#bbb" />
          <path d="M480 932V897" stroke="#2a8a3a" strokeWidth="2" /><path d="M477 904l3-9 3 9z" fill="#2a8a3a" />
          <path d="M480 932h28" stroke="#c06060" strokeWidth="2" /><path d="M506 929l18 3-18 3z" fill="#e02828" /><circle cx="480" cy="932" r="3.500" fill="#1040c0" />
          <text x="525" y="936" fill="#d83030" fontSize="11" fontFamily="Liberation Sans">X</text>
        </g>
      </svg>
      <button aria-label="网盘" className="absolute top-[7px] right-0 flex h-10 w-[26px] items-center overflow-hidden rounded-l-lg bg-[#0d94ff] pl-2">
        <svg viewBox="0 0 34 24" fill="none" stroke="#fff" strokeWidth="4" className="h-6 w-[34px] shrink-0"><circle cx="7" cy="15" r="5" /><circle cx="14" cy="8" r="5.500" /><path d="M11 18l6-5 6 6" /></svg>
      </button>
    </main>
  );
}

function Office({ letter, box, c1, c2, c3, round }: { letter: string; box: string; c1: string; c2: string; c3: string; round?: boolean }) {
  return (
    <svg viewBox="0 0 30 30" className="size-[30px]">
      {round ? (
        <><circle cx="16" cy="15" r="13.500" fill={c1} /><path d="M16 1.500A13.500 13.500 0 0 1 29.500 15H16z" fill={c2} /><path d="M3 17a13.500 13.500 0 0 0 26 0z" fill={c3} /></>
      ) : (
        <><path d="M7 2h22v9H7z" fill={c1} /><path d="M7 10h22v9H7z" fill={c2} /><path d="M7 19h22v9H7z" fill={c3} /></>
      )}
      <rect x="1" y="7" width="15" height="16" rx="1.500" fill={box} />
      <text x="8.500" y="19.500" textAnchor="middle" fontSize="12" fontWeight="700" fill="#fff">{letter}</text>
    </svg>
  );
}

function Taskbar() {
  const cell = "flex h-12 w-[55px] flex-col items-center justify-center relative";
  const dot = "absolute -bottom-px h-1 w-2 rounded-full bg-[#858b92]";
  return (
    <footer className="flex h-[59px] shrink-0 items-center bg-linear-to-r from-[#dae8f6] via-[#d5e9f3] to-[#dce9f8] text-[15px] text-[#222]">
      <div className="flex w-[489px] items-center gap-2 pb-1 pl-6">
        <div className="relative">
          <svg viewBox="0 0 32 32" className="size-8">
            <defs><linearGradient id="cl" x2="0" y2="1"><stop stopColor="#7aa8f4" /><stop offset="1" stopColor="#dce8fc" /></linearGradient></defs>
            <path d="M7 23a6 6 0 0 1 0-11 9 9 0 0 1 17-1 6 6 0 0 1 1 12z" fill="url(#cl)" />
            <path d="M12 18c3 5 4 6 4 8a4 4 0 0 1-8 0c0-2 3-5 4-8zM24 18c3 5 4 6 4 8a4 4 0 0 1-8 0c0-2 3-5 4-8z" fill="#1a7cf0" />
          </svg>
          <span className="absolute -top-2 -right-0.5 flex size-[19px] items-center justify-center rounded-full bg-[#c42b1c] text-sm text-white">1</span>
        </div>
        <div className="leading-5"><div>26°C</div><div className="text-[#555]">阵雨</div></div>
      </div>
      <div className={cell}>
        <svg viewBox="0 0 30 30" className="size-[30px]"><defs><linearGradient id="win" x2="1" y2="1"><stop stopColor="#4cd0ff" /><stop offset="1" stopColor="#0067c8" /></linearGradient></defs><path d="M0 1h14v13.500H0zM15 1h14v13.500H15zM0 15.500h14V29H0zM15 15.500h14V29H15z" fill="url(#win)" /></svg>
      </div>
      <label className="mr-[3px] ml-[3px] flex h-[39px] w-[274px] items-center rounded-full border border-[#c2d4e6] bg-[#f3f8fd] pr-1 pl-3.5">
        <svg viewBox="0 0 20 20" fill="none" stroke="#222" strokeWidth="2.200" className="size-5 shrink-0"><circle cx="9" cy="8" r="6.800" /><path d="M14 13l5 6" /></svg>
        <input aria-label="搜索" placeholder="搜索" className="ml-2.5 w-0 flex-1 text-lg outline-none placeholder:text-[#5a5f66]" />
        <svg viewBox="0 0 58 32" className="h-8 w-[58px] shrink-0">
          <path d="M2 28c10-5 44-6 54-2-6 5-44 6-54 2z" fill="#ecd2b4" /><path d="M28 2L10 26h16z" fill="#e0b285" /><path d="M28 2l16 22-18 2z" fill="#b97f4c" /><path d="M48 9l-6 9 4 4h10z" fill="#a86f42" /><path d="M48 9l-8 12h6z" fill="#d8a878" />
          <path d="M5 17c0-4 7-4 7 0l-1 4 4 3v5H1c0-3 3-4 5-6z" fill="#b5753a" /><path d="M31 26l4-3 4 2 3-2 3 3-2 4H32z" fill="#b07848" />
        </svg>
      </label>
      <div className={cell}><svg viewBox="0 0 30 30" className="size-[30px]"><rect x="1" y="9" width="21" height="20" rx="1.500" fill="#2a2a2a" /><rect x="8" y="2" width="21" height="19" rx="1.500" fill="#fff" fillOpacity=".88" stroke="#ddd" /><path d="M8 9h14v12H8z" fill="#b4b4b4" /></svg></div>
      <div className={cell}><svg viewBox="0 0 30 30" className="size-[30px]"><path d="M0 3h10l3 3v6H0z" fill="#e29a08" /><path d="M0 8l13-1 3-1h12a2 2 0 0 1 2 2v20H0z" fill="#ffcb3d" /><path d="M5 29v-5a3 3 0 0 1 3-3h14a3 3 0 0 1 3 3v5z" fill="#1277d0" /><path d="M9 25h12" stroke="#0a4c94" strokeWidth="1.500" /></svg><span className={dot} /></div>
      <div className={cell}><svg viewBox="0 0 30 30" className="size-[30px]"><path d="M0 11L15 1l15 10v3H0z" fill="#0a5cac" /><path d="M3 11h24l-12 10z" fill="#f2f2f2" /><path d="M0 12l15 10 15-10v17H0z" fill="#35bdf2" /><path d="M0 12l24 17H0z" fill="#1c94dc" /></svg></div>
      <div className={cell}><Office letter="N" box="#7719aa" c1="#ca64ea" c2="#ae4bd5" c3="#9332bf" /></div>
      <div className={cell}><svg viewBox="0 0 30 30" className="size-[30px]"><path d="M16 0l14 14-14 8L5 10z" fill="#41a5ee" /><path d="M18 9h12v12H18z" fill="#2b7cd3" /><circle cx="16" cy="22" r="7" fill="#185abd" /><rect x="1" y="7" width="15" height="16" rx="1.500" fill="#1b5cbe" /><text x="8.500" y="19.500" textAnchor="middle" fontSize="12" fontWeight="700" fill="#fff">V</text></svg></div>
      <div className={cell}><Office letter="W" box="#185abd" c1="#41a5ee" c2="#2167cf" c3="#103f91" /></div>
      <div className={cell}><Office letter="X" box="#107c41" c1="#33c481" c2="#21a366" c3="#185c37" /></div>
      <div className={cell}>
        <svg viewBox="0 0 30 30" className="size-[30px]"><defs><linearGradient id="ed" x2="1" y2=".5"><stop stopColor="#1a8ae0" /><stop offset=".6" stopColor="#2cc0c8" /><stop offset="1" stopColor="#6ae04a" /></linearGradient></defs><circle cx="15" cy="15" r="15" fill="url(#ed)" /><path d="M0 15c0-6 6-9 11-7 5 1 8 4 7 7 0-2-5-2-6 1-1 5 5 9 15 7-5 7-13 8-18 6S0 21 0 15z" fill="#125fb0" /><path d="M14 16c0-2 1-4 3-4 3 0 3 3 2 5s2 4 10 3l-2 3c-7 1-13-2-13-7z" fill="#dff0fa" /></svg>
        <span className={dot} />
      </div>
      <div className={cell}><Office letter="P" box="#c43e1c" c1="#ed6c47" c2="#ff8f6b" c3="#d35230" round /></div>
      <div className={cell}>
        <svg viewBox="0 0 32 32" className="size-8"><path d="M15 2l14 8v13l-14 8-14-8V10z" fill="#5478ee" /><path d="M6 11l4 12 5-10 5 10 4-12" fill="none" stroke="#fff" strokeWidth="2.200" /><rect x="22" y="0" width="10" height="12" rx="4" fill="#3f74c8" /><path d="M24 4l1.500 4L27 5l1.500 3L30 4" stroke="#fff" fill="none" /></svg>
        <span className={dot} />
      </div>
      <div className={cell}>
        <div className="flex size-12 items-center justify-center rounded-md bg-[#f2f7fc]">
          <svg viewBox="0 0 32 32" className="size-8"><defs><radialGradient id="gl"><stop stopColor="#5ff4ff" /><stop offset="1" stopColor="#0a56c8" /></radialGradient></defs><circle cx="16" cy="17" r="12" fill="url(#gl)" /><path d="M24 6c9 1 8 12-1 18-7 5-16 6-20 3 2 0 3-1 4-1 5 0 11-2 15-6 5-5 7-11 2-14z" fill="#f7a91c" /><path d="M5 1l15 3-7 12z" fill="#e0243e" stroke="#8a0d22" /><path d="M5 1l5 2 3 13z" fill="#f88a98" /></svg>
        </div>
        <span className="absolute -bottom-px h-1 w-5 rounded-full bg-[#0078d4]" />
      </div>
      <div className="ml-auto flex items-center pr-4">
        <svg viewBox="0 0 16 16" className="mr-[23px] size-4" fill="none" stroke="#222" strokeWidth="1.800"><path d="M2 11l6-6 6 6" /></svg>
        <svg viewBox="0 0 20 16" className="mr-5 h-4 w-5"><path d="M1 6l5 2 2-5h11c1 8-4 13-12 12-4 0-6-5-6-9z" fill="#5b7df5" /><path d="M5 10l3 3 9-10" stroke="#fff" strokeWidth="1.500" fill="none" /></svg>
        <span className="mr-[31px] pb-0.5 text-lg">中</span>
        <span className="mr-7 pb-0.5 text-lg">拼</span>
        <svg viewBox="0 0 20 16" className="mr-2.5 h-4 w-5" fill="none" stroke="#222" strokeWidth="1.500"><path d="M1 6a13 13 0 0 1 18 0M4 9a9 9 0 0 1 12 0M7 12a4 4 0 0 1 6 0" /><circle cx="10" cy="14" r="1" fill="#222" /></svg>
        <svg viewBox="0 0 20 16" className="mr-2.5 h-4 w-5" fill="none" stroke="#222" strokeWidth="1.400"><path d="M1 6h3l5-4v12l-5-4H1zM13 6l5 5M18 6l-5 5" /></svg>
        <svg viewBox="0 0 20 18" className="mr-5 h-[18px] w-5"><rect x="1" y="5" width="16" height="11" rx="2.500" fill="none" stroke="#222" strokeWidth="1.500" /><path d="M5 7h10v7H3V9zM18 8h2v5h-2z" fill="#222" /><path d="M5 0L1 6h3L3 10l5-6H5z" fill="#222" stroke="#dce9f8" strokeWidth=".5" /></svg>
        <div className="mr-2.5 pb-1 text-right leading-5">
          <div>17:48</div><div>2023-06-29</div>
        </div>
        <svg viewBox="0 0 28 24" className="h-6 w-7"><circle cx="9" cy="10" r="9" fill="#1470c4" /><path d="M2 23V4l7 12 8-14v21M21 2v21M26 2v21" fill="none" stroke="#111" strokeWidth="3" /></svg>
      </div>
    </footer>
  );
}

export default function App() {
  return (
    <div className="relative flex h-screen min-h-[1080px] flex-col overflow-hidden bg-white font-['Noto_Sans','Noto_Sans_CJK_SC',sans-serif]">
      <TitleBar />
      <TabBar />
      <Ribbon />
      <Toolbar />
      <div className="flex min-h-0 flex-1">
        <ResourceBar />
        <Navigator />
        <Viewport />
      </div>
      <div className="flex h-6 shrink-0 items-center border-y border-[#a4a8ac] bg-white pb-0.5 text-sm leading-5 font-bold text-[#222]">
        <span className="w-[906px] pl-[3px]">选择对象并使用 M</span>
        <span>全部 1</span>
        <span className="mr-[55px] ml-auto flex gap-1"><Icon n="flag" /><Icon n="calc" /></span>
      </div>
      <Taskbar />
      <Menu items={mainMenu} compact className="top-[199px] left-[7px] w-[116px]" />
      <Menu items={analysisMenu} className="top-[304px] left-[120px] w-[223px]" />
      <Menu items={curveMenu} className="top-[642px] left-[340px] w-[241px]" />
      <div role="tooltip" className="absolute top-[827px] left-[578px] flex h-9 w-[271px] items-center border border-[#a0a0a0] bg-white pl-[7px] text-[15px] whitespace-nowrap text-[#222] shadow-[3px_3px_3px_rgba(0,0,0,0.45)]">
        为选定的曲线分析对象列出分析数据。
      </div>
      <span className="absolute right-3 bottom-1.5 text-xs leading-4 text-[#777]/80">CSDN @LSH97</span>
    </div>
  );
}
